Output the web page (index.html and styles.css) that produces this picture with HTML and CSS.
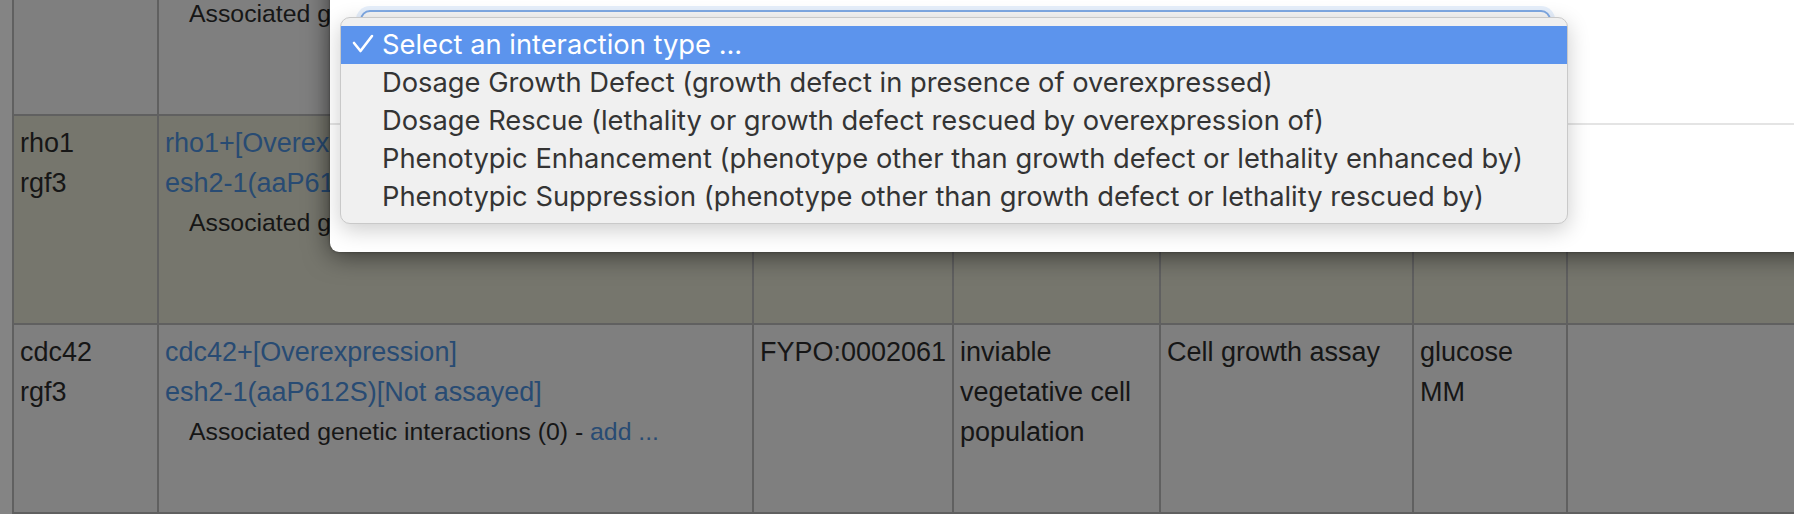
FILE: index.html
```html
<!DOCTYPE html>
<html lang="en">
<head>
<meta charset="utf-8">
<title>Genotype annotations</title>
<link rel="stylesheet" href="styles.css">
</head>
<body>
<div class="page">
  <div class="grid">
    <div class="row row-first">
      <div class="cell"></div>
      <div class="cell"><div class="assoc">Associated genetic interactions (0) - <a class="link" href="#">add ...</a></div></div>
      <div class="cell"></div>
      <div class="cell"></div>
      <div class="cell"></div>
      <div class="cell"></div>
      <div class="cell"></div>
    </div>
    <div class="row row-hl">
      <div class="cell"><div>rho1</div><div>rgf3</div></div>
      <div class="cell">
        <div><a class="link" href="#">rho1+[Overexpression]</a></div>
        <div><a class="link" href="#">esh2-1(aaP612S)[Not assayed]</a></div>
        <div class="assoc">Associated genetic interactions (0) - <a class="link" href="#">add ...</a></div>
      </div>
      <div class="cell"></div>
      <div class="cell"></div>
      <div class="cell"></div>
      <div class="cell"></div>
      <div class="cell"></div>
    </div>
    <div class="row row-last">
      <div class="cell"><div>cdc42</div><div>rgf3</div></div>
      <div class="cell">
        <div><a class="link" href="#">cdc42+[Overexpression]</a></div>
        <div><a class="link" href="#">esh2-1(aaP612S)[Not assayed]</a></div>
        <div class="assoc">Associated genetic interactions (0) - <a class="link" href="#">add ...</a></div>
      </div>
      <div class="cell">FYPO:0002061</div>
      <div class="cell">inviable vegetative cell population</div>
      <div class="cell">Cell growth assay</div>
      <div class="cell">glucose MM</div>
      <div class="cell"></div>
    </div>
  </div>
</div>

<div class="dialog">
  <div class="dialog-head">
    <div class="select-box"></div>
  </div>
</div>

<div class="menu">
  <div class="item selected">
    <span class="check"><svg width="22" height="20" viewBox="0 0 22 20"><polyline points="2,9 8.5,17 20,2" fill="none" stroke="#ffffff" stroke-width="2.6" stroke-linecap="round" stroke-linejoin="round"/></svg></span>
    <span class="label">Select an interaction type ...</span>
  </div>
  <div class="item"><span class="check"></span><span class="label">Dosage Growth Defect (growth defect in presence of overexpressed)</span></div>
  <div class="item"><span class="check"></span><span class="label">Dosage Rescue (lethality or growth defect rescued by overexpression of)</span></div>
  <div class="item"><span class="check"></span><span class="label">Phenotypic Enhancement (phenotype other than growth defect or lethality enhanced by)</span></div>
  <div class="item"><span class="check"></span><span class="label">Phenotypic Suppression (phenotype other than growth defect or lethality rescued by)</span></div>
</div>
</body>
</html>
```

FILE: styles.css
```css
html, body {
  margin: 0;
  padding: 0;
}

body {
  width: 1794px;
  height: 514px;
  overflow: hidden;
  background: #848484;
  font-family: "Liberation Sans", Arial, Helvetica, sans-serif;
  color: #161616;
  position: relative;
}

.page {
  padding-left: 12px;
  margin-top: -6px;
}

.grid {
  display: flex;
  flex-direction: column;
  border-bottom: 2px solid #606060;
}

.row {
  display: grid;
  grid-template-columns: 145px 595px 200px 207px 253px 154px 260px;
  background: #7f7f7f;
}

.row-first { height: 120px; }
.row-hl { height: 209px; background: #76766d; }
.row-last { height: 189px; }

.cell {
  box-sizing: border-box;
  border-left: 2px solid #606060;
  border-top: 2px solid #606060;
  padding: 7px 6px 0 6px;
  font-size: 27px;
  line-height: 40px;
}

.row-first .cell {
  border-top: none;
  padding-top: 0;
}

.link {
  color: #284b73;
  text-decoration: none;
}

.assoc {
  font-size: 24.8px;
  padding-left: 24px;
  line-height: 40px;
}

/* dialog overlay */
.dialog {
  position: absolute;
  left: 330px;
  top: -40px;
  width: 1520px;
  height: 292px;
  background: #ffffff;
  border-radius: 9px;
  box-shadow: 0 3px 26px rgba(0, 0, 0, 0.55), 0 0 3px rgba(0, 0, 0, 0.35);
}

.dialog-head {
  height: 165px;
  padding: 50px 0 0 30px;
  box-sizing: border-box;
  border-bottom: 2px solid #e4e4e4;
}

.select-box {
  width: 1191px;
  height: 56px;
  box-sizing: border-box;
  border: 2px solid #7fa9e4;
  border-radius: 10px;
  background: #f6f6f6;
  box-shadow: 0 0 0 4px rgba(140, 180, 235, 0.22);
}

/* native popup menu */
.menu {
  position: absolute;
  left: 340px;
  top: 17px;
  width: 1228px;
  height: 207px;
  box-sizing: border-box;
  padding: 8px 0;
  background: #f0f0f0;
  border: 1px solid #c9c9c9;
  border-radius: 10px;
  box-shadow: 0 6px 22px rgba(0, 0, 0, 0.2);
  font-family: Inter, "Liberation Sans", Arial, sans-serif;
  font-size: 27.3px;
  color: #343434;
  overflow: hidden;
}

.item {
  display: flex;
  align-items: center;
  height: 38px;
  padding-left: 11px;
  padding-bottom: 2px;
  box-sizing: border-box;
  white-space: nowrap;
}

.item.selected {
  background: #5c94ed;
  color: #ffffff;
}

.check {
  display: flex;
  align-items: center;
  width: 30px;
  height: 36px;
}
```
